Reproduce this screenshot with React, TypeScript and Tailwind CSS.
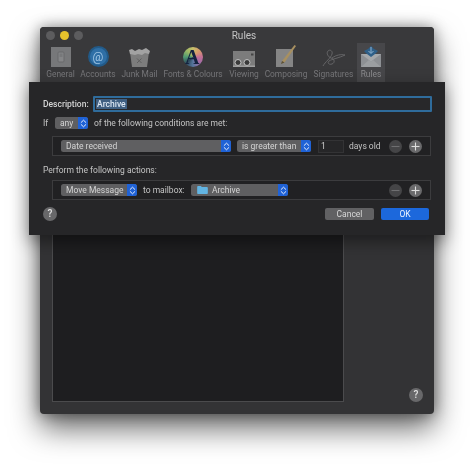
import React from 'react';

function Chevrons() {
  return (
    <svg width="7" height="9" viewBox="0 0 7 9" fill="none" stroke="#e8eefb" strokeWidth="1" strokeLinecap="round" strokeLinejoin="round">
      <path d="M1.200 3.400 3.500 1.200l2.300 2.200" />
      <path d="M1.200 5.600 3.500 7.800l2.300-2.200" />
    </svg>
  );
}

function Popup({ label, className, icon }: { label: string; className: string; icon?: boolean }) {
  return (
    <div className={`flex h-[12px] items-center rounded-[2.5px] bg-[#5f5f61] ${className}`}>
      <div className="flex min-w-0 flex-1 items-center gap-[4px] pl-[5px] text-[8.5px] leading-none text-[#d4d4d4]">
        {icon && (
          <svg width="11" height="8" viewBox="0 0 12 9" className="shrink-0">
            <path d="M0 1.200C0 .5.5 0 1.200 0h3l1 1.200h5.600c.7 0 1.200.5 1.200 1.200v5.400c0 .7-.5 1.200-1.200 1.200H1.200C.5 9 0 8.500 0 7.800z" fill="#62b4e2" />
          </svg>
        )}
        <span className="whitespace-nowrap">{label}</span>
      </div>
      <div className="flex h-[12px] w-[10px] shrink-0 items-center justify-center rounded-r-[2.5px] bg-[#1f62d6]">
        <Chevrons />
      </div>
    </div>
  );
}

function RoundButton({ kind, dim }: { kind: string; dim?: boolean }) {
  return (
    <div className={`flex h-[13px] w-[13px] items-center justify-center rounded-full ${dim ? 'bg-[#454547]' : 'bg-[#6a6a6c]'}`}>
      <svg width="9" height="9" viewBox="0 0 9 9" stroke={dim ? '#6f6f71' : '#dedede'} strokeWidth="1.100">
        <path d="M.5 4.500h8" />
        {kind === 'plus' && <path d="M4.500.5v8" />}
      </svg>
    </div>
  );
}

function Help() {
  return (
    <div className="flex h-[14px] w-[14px] items-center justify-center rounded-full bg-[#68686a] text-[10px] font-medium leading-none text-[#e2e2e2]">
      ?
    </div>
  );
}

function GeneralIcon() {
  return (
    <svg width="20" height="20" viewBox="0 0 20 20">
      <rect width="20" height="20" fill="#77787a" />
      <rect x="7" y="5" width="6" height="10" rx="1" fill="#858688" stroke="#68696b" />
      <rect x="8.500" y="6.500" width="3" height="3.500" fill="#77787a" />
    </svg>
  );
}

function AccountsIcon() {
  return (
    <div className="flex h-[21px] w-[21px] items-center justify-center rounded-full border-2 border-[#225a88] bg-[#2f6fa6] text-[12px] leading-none text-[#9fc4e2]">
      @
    </div>
  );
}

function JunkIcon() {
  return (
    <svg width="21" height="19" viewBox="0 0 21 19">
      <path d="M1 4h19l-2 15H3z" fill="#7d7d7d" />
      <path d="M0 2l3-1 3 2 4-2 3 1 4-2 4 3-1 3-4-1-3 2-4-1-3 1-5-1z" fill="#a2a2a2" />
      <path d="M8 10.500l4.500 4.500M12.500 10.500 8 15" stroke="#5f5f5f" strokeWidth="1" />
    </svg>
  );
}

function FontsIcon() {
  return (
    <div className="relative h-[20px] w-[20px] rounded-full bg-[conic-gradient(#c8bf6a,#d89a6c,#c46f96,#9a6ca8,#56779f,#2f4a5e,#4f9a72,#9bb866,#c8bf6a)]">
      <span className="absolute left-[2px] top-[1px] font-['Liberation_Serif',serif] text-[20px] font-bold leading-[19px] text-[#14233f]">A</span>
    </div>
  );
}

function ViewingIcon() {
  return (
    <svg width="22" height="16" viewBox="0 0 22 16">
      <rect width="22" height="16" fill="#7c7c7c" />
      <circle cx="5" cy="11.500" r="3" fill="#3a3a3a" stroke="#c4c4c4" />
      <circle cx="14" cy="11.500" r="3" fill="#3a3a3a" stroke="#c4c4c4" />
      <rect x="18" y="2.500" width="2.500" height="2" fill="#444" />
      <path d="M0 16h22v-1.500H0z" fill="#a0a0a0" />
    </svg>
  );
}

function ComposingIcon() {
  return (
    <svg width="20" height="23" viewBox="0 0 20 23">
      <rect x="0" y="5" width="17" height="18" fill="#858585" />
      <path d="M6 17 18.500 1 20 2 8.500 18.500z" fill="#a89060" />
      <path d="M6 17l-1 3 3.500-1.500z" fill="#5e5132" />
    </svg>
  );
}

function SignatureIcon() {
  return (
    <svg width="24" height="18" viewBox="0 0 24 18" fill="none" stroke="#69696b" strokeWidth="0.9">
      <path d="M1 17C3 13 9 9 10 5 11 2 8 0 6 2 4 4 6 8 9 9c4 1 4 5 1 6-3 1-5-1-3-3 3-2 10-3 16-6-4-1-9 0-13 3" />
    </svg>
  );
}

function RulesIcon() {
  return (
    <svg width="20" height="21" viewBox="0 0 20 21">
      <path d="M0 8h20v13H0z" fill="#8d9094" />
      <path d="M0 8l10 7.500L20 8z" fill="#a5a8ab" />
      <path d="M0 21l8-7 2 1.500 2-1.500 8 7z" fill="#9b9ea1" />
      <path d="M3 5l4-2L10 0l3 3 4 2-3 3-4 3-4-3z" fill="#2e5f88" />
      <path d="M10 1v6M7.500 5 10 7.500 12.500 5" stroke="#8eb4d2" strokeWidth="1" fill="none" />
    </svg>
  );
}

const tabs = [
  { label: 'General', icon: <GeneralIcon />, w: 'w-[39px]' },
  { label: 'Accounts', icon: <AccountsIcon />, w: 'w-[36px]' },
  { label: 'Junk Mail', icon: <JunkIcon />, w: 'w-[47px]' },
  { label: 'Fonts & Colours', icon: <FontsIcon />, w: 'w-[60px]' },
  { label: 'Viewing', icon: <ViewingIcon />, w: 'w-[42px]' },
  { label: 'Composing', icon: <ComposingIcon />, w: 'w-[42px]' },
  { label: 'Signatures', icon: <SignatureIcon />, w: 'ml-[3px] w-[47px]' },
];

export default function App() {
  return (
    <div className="h-[467px] w-[474px] overflow-hidden bg-white pl-[40px] pt-[27px] font-['Roboto','Liberation_Sans',sans-serif] blur-[0.35px]">
      <div className="relative flex h-[387px] w-[394px] flex-col rounded-[4px] bg-[#333335] shadow-[0_14px_30px_rgba(0,0,0,0.6),0_0_14px_rgba(0,0,0,0.4)]">
        {/* title bar */}
        <div className="relative flex h-[16px] shrink-0 items-center gap-[5px] rounded-t-[4px] bg-[#39393b] pl-[6px] pt-[1px]">
          <div className="h-[9px] w-[9px] rounded-full bg-[#5c5c5e]" />
          <div className="h-[9px] w-[9px] rounded-full bg-[#e6c22c]" />
          <div className="h-[9px] w-[9px] rounded-full bg-[#5c5c5e]" />
          <div className="flex-1 pr-[34px] text-center text-[10px] leading-none text-[#c4c4c4]">Rules</div>
        </div>

        {/* toolbar */}
        <div className="flex h-[39px] shrink-0 items-stretch bg-[#39393b] pl-[1px]">
          {tabs.map((t) => (
            <div key={t.label} className={`flex flex-col items-center ${t.w}`}>
              <div className="flex h-[24px] items-end justify-center">{t.icon}</div>
              <span className="mt-[3px] whitespace-nowrap text-[8.4px] leading-[9px] text-[#77777a]">{t.label}</span>
            </div>
          ))}
          <div className="flex w-[28px] flex-col items-center bg-[#47474a]">
            <div className="flex h-[24px] items-end justify-center"><RulesIcon /></div>
            <span className="mt-[3px] text-[8.4px] leading-[9px] text-[#8b8b8e]">Rules</span>
          </div>
        </div>

        {/* content behind sheet */}
        <div className="flex min-h-0 flex-1 pb-[12px] pl-[12px] pr-[12px]">
          <div className="h-full w-[292px] border border-[#4b4b4d] bg-[#1e1e20]" />
          <div className="flex flex-1 items-end justify-end pl-[1px]">
            <div className="translate-x-[1px]"><Help /></div>
          </div>
        </div>

        {/* sheet */}
        <div className="absolute left-[-11px] top-[55px] flex h-[153px] w-[416px] flex-col bg-[#262628] px-[14px] pt-[14px] text-[8.5px] leading-none text-[#c4c4c4] shadow-[0_6px_16px_rgba(0,0,0,0.45)]">
          <div className="flex h-[16px] items-center">
            <span className="w-[50px] shrink-0 font-medium text-[#d4d4d4]">Description:</span>
            <div className="mr-[-1px] flex h-[16px] flex-1 items-center rounded-[1px] border-2 border-[#2f6c9c] bg-[#28282a] pl-[1px]">
              <span className="bg-[#3f5f82] px-[1px] py-[0.5px] font-medium text-[#dbe6f2]">Archive</span>
            </div>
          </div>

          <div className="mt-[5px] flex h-[12px] items-center">
            <span className="w-[12px]">If</span>
            <Popup label="any" className="w-[33px]" />
            <span className="ml-[6px]">of the following conditions are met:</span>
          </div>

          <div className="ml-[9px] mt-[7px] flex h-[20px] w-[379px] items-center border border-[#3c3c3e] bg-[#212123] pl-[8px]">
            <Popup label="Date received" className="w-[170px]" />
            <Popup label="is greater than" className="ml-[6px] w-[74px]" />
            <div className="ml-[7px] flex h-[13px] w-[26px] items-center border border-[#333335] bg-[#262628] pl-[2px] text-[#d0d0d0]">1</div>
            <span className="ml-[5px] whitespace-nowrap">days old</span>
            <div className="ml-auto flex gap-[7px] pr-[8px]">
              <RoundButton kind="minus" dim />
              <RoundButton kind="plus" />
            </div>
          </div>

          <div className="mt-[9px] flex h-[10px] items-center">Perform the following actions:</div>

          <div className="ml-[9px] mt-[5px] flex h-[20px] w-[379px] items-center border border-[#3c3c3e] bg-[#212123] pl-[8px]">
            <Popup label="Move Message" className="w-[76px]" />
            <span className="ml-[6px] w-[48px] whitespace-nowrap">to mailbox:</span>
            <Popup label="Archive" icon className="w-[97px] pl-[1px]" />
            <div className="ml-auto flex gap-[7px] pr-[8px]">
              <RoundButton kind="minus" dim />
              <RoundButton kind="plus" />
            </div>
          </div>

          <div className="mt-[7px] flex items-center">
            <Help />
            <div className="ml-auto flex gap-[7px] pr-[2px]">
              <div className="flex h-[12px] w-[49px] items-center justify-center rounded-[2px] bg-[#616163] text-[#d8d8d8]">Cancel</div>
              <div className="flex h-[12px] w-[48px] items-center justify-center rounded-[2px] bg-[#1c68dc] text-[#eef4ff]">OK</div>
            </div>
          </div>
        </div>
      </div>
    </div>
  );
}
